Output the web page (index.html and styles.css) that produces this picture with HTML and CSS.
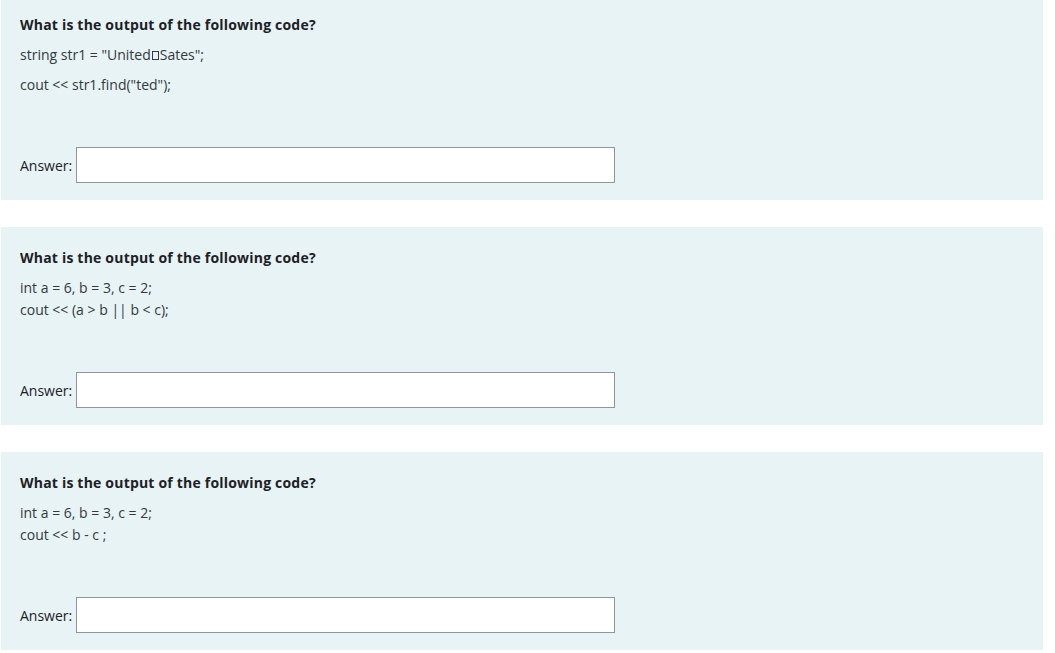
FILE: index.html
```html
<!DOCTYPE html>
<html>
<head>
<meta charset="utf-8">
<link rel="stylesheet" href="styles.css">
</head>
<body>
<div class="page">
  <div class="que">
    <div class="heading">What is the output of the following code?</div>
    <div class="qtext">
      <p class="line">string str1 = "United<span class="tofu"></span>Sates";</p>
      <p class="line">cout &lt;&lt; str1.find("ted");</p>
    </div>
    <div class="answer"><label>Answer:</label><input type="text" class="field"></div>
  </div>
  <div class="que">
    <div class="heading">What is the output of the following code?</div>
    <div class="qtext">
      <p class="code">int a = 6, b = 3, c = 2;<br>cout &lt;&lt; (a &gt; b || b &lt; c);</p>
    </div>
    <div class="answer"><label>Answer:</label><input type="text" class="field"></div>
  </div>
  <div class="que">
    <div class="heading">What is the output of the following code?</div>
    <div class="qtext">
      <p class="code">int a = 6, b = 3, c = 2;<br>cout &lt;&lt; b - c ;</p>
    </div>
    <div class="answer"><label>Answer:</label><input type="text" class="field"></div>
  </div>
</div>
</body>
</html>
```

FILE: styles.css
```css
html, body {
  margin: 0;
  padding: 0;
  background: #fff;
}
body {
  font-family: "Open Sans", "Noto Sans", sans-serif;
  font-size: 14px;
  color: #1d2125;
}
.page {
  margin: -6px 0 0 1px;
  width: 1042px;
  display: flex;
  flex-direction: column;
  gap: 27px;
}
.que {
  background: #e7f3f5;
  padding: 20px 19px 17px;
}
.heading {
  font-weight: 700;
  line-height: 22px;
  letter-spacing: 0.2px;
}
.qtext {
  margin-top: 8px;
  color: #343a40;
}
.line {
  margin: 0 0 8px;
  line-height: 22px;
}
.code {
  margin: 0;
  line-height: 22px;
}
.tofu {
  display: inline-block;
  width: 5px;
  height: 7px;
  border: 1px solid #343a40;
  margin: 0 1px;
}
.answer {
  margin-top: 51px;
  display: flex;
  align-items: center;
  gap: 4px;
}
.answer label {
  color: #1d2125;
}
.field {
  width: 539px;
  height: 36px;
  box-sizing: border-box;
  border: 1px solid #8f959e;
  background: #fff;
  margin: 0;
  padding: 0 8px;
}
```
